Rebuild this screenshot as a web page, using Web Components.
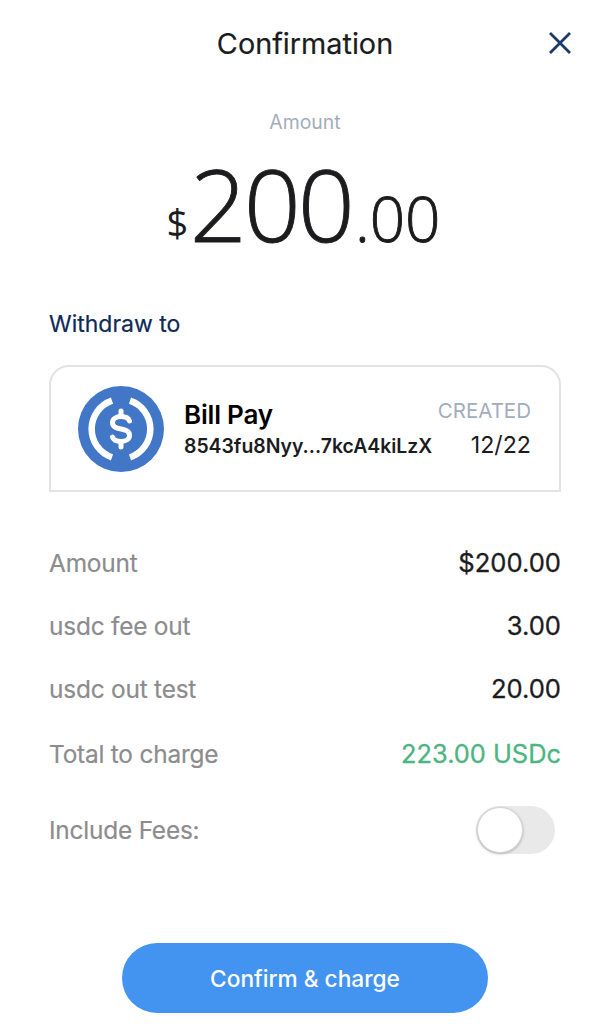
<!doctype html>
<html>
<head>
<meta charset="utf-8">
<style>
  html, body { margin: 0; background: #fff; }
  body { font-family: Inter, "Liberation Sans", sans-serif; }
</style>
</head>
<body>
<confirm-screen>
  <confirm-header title="Confirmation"></confirm-header>
  <amount-display label="Amount" whole="200" cents=".00"></amount-display>
  <withdraw-card name="Bill Pay" address="8543fu8Nyy...7kcA4kiLzX" created="12/22"></withdraw-card>
  <summary-row label="Amount" value="$200.00"></summary-row>
  <summary-row label="usdc fee out" value="3.00"></summary-row>
  <summary-row label="usdc out test" value="20.00"></summary-row>
  <summary-row label="Total to charge" value="223.00 USDc" highlight></summary-row>
  <fee-toggle label="Include Fees:"></fee-toggle>
  <confirm-button label="Confirm &amp; charge"></confirm-button>
</confirm-screen>

<script>
const confirmScreenTemplate = document.createElement("template");
confirmScreenTemplate.innerHTML = `
  <style>
    :host { display: flex; flex-direction: column; width: 610px; height: 1024px; box-sizing: border-box; padding: 0 49px; overflow: hidden; }
  </style>
  <slot></slot>
`;

class ConfirmScreen extends HTMLElement {
  connectedCallback() {
    if (!this.shadowRoot) {
      this.attachShadow({ mode: "open" });
      this.shadowRoot.appendChild(confirmScreenTemplate.content.cloneNode(true));
    }
  }
}

class ConfirmHeader extends HTMLElement {
  connectedCallback() {
    if (!this.shadowRoot) {
      this.attachShadow({ mode: "open" });
      this.shadowRoot.innerHTML = `
        <style>
          :host { display: flex; align-items: center; justify-content: center; height: 86px; position: relative; }
          h1 { margin: 0; font-size: 28.8px; font-weight: 400; color: #1c1c1e; -webkit-text-stroke: 0.2px #1c1c1e; }
          svg { position: absolute; right: -11px; top: 31px; }
        </style>
        <h1>${this.getAttribute("title")}</h1>
        <svg width="24" height="24" viewBox="0 0 24 24" fill="none" stroke="#1c3a6b" stroke-width="2.8">
          <path d="M2 2 L22 22 M22 2 L2 22"/>
        </svg>
      `;
    }
  }
}

class AmountDisplay extends HTMLElement {
  connectedCallback() {
    if (!this.shadowRoot) {
      this.attachShadow({ mode: "open" });
      this.shadowRoot.innerHTML = `
        <style>
          :host { display: flex; flex-direction: column; align-items: center; height: 224px; }
          .label { margin-top: 25px; font-size: 19.4px; line-height: 22px; color: #a3adbd; }
          .value { margin-top: 10px; padding-right: 3px; display: flex; align-items: baseline; font-family: "Open Sans", sans-serif; font-weight: 300; color: #1c1c1e; -webkit-text-stroke: 0.9px #1c1c1e; }
          .cur { font-size: 38px; margin-right: 1.5px; font-weight: 400; -webkit-text-stroke: 0; transform: translateY(-5px); }
          .whole { font-size: 100px; line-height: 120px; letter-spacing: -3px; }
          .cents { font-size: 62px; margin-left: 3px; }
        </style>
        <div class="label">${this.getAttribute("label")}</div>
        <div class="value">
          <span class="cur">$</span><span class="whole">${this.getAttribute("whole")}</span><span class="cents">${this.getAttribute("cents")}</span>
        </div>
      `;
    }
  }
}

class WithdrawCard extends HTMLElement {
  connectedCallback() {
    if (!this.shadowRoot) {
      this.attachShadow({ mode: "open" });
      this.shadowRoot.innerHTML = `
        <style>
          :host { display: block; margin-bottom: 39px; }
          h2 { margin: 0 0 27px; font-size: 23px; line-height: 28px; font-weight: 400; color: #0f2a55; -webkit-text-stroke: 0.2px #0f2a55; }
          .card { display: flex; align-items: center; height: 127px; box-sizing: border-box; padding: 0 28px 0 27px; border: 2px solid #e2e3e5; border-top-left-radius: 20px; border-top-right-radius: 20px; }
          svg { flex: none; margin-right: 20px; }
          .info { flex: 1; min-width: 0; padding-top: 5px; }
          .name { font-size: 26px; line-height: 31px; font-weight: 600; color: #000; letter-spacing: -0.2px; }
          .addr { font-size: 19.4px; line-height: 33px; font-weight: 600; color: #1c1c1e; white-space: nowrap; }
          .meta { text-align: right; padding-top: 2px; }
          .created { font-size: 20.5px; line-height: 31px; color: #a3adbd; }
          .date { font-size: 23.2px; line-height: 39px; color: #1c1c1e; }
        </style>
        <h2>Withdraw to</h2>
        <div class="card">
          <svg width="86" height="86" viewBox="0 0 86 86">
            <circle cx="43" cy="43" r="43" fill="#4277c8"/>
            <g fill="none" stroke="#fff" stroke-width="6.5">
              <path d="M34 14.6 A30 30 0 0 0 34 71.4"/>
              <path d="M52 14.6 A30 30 0 0 1 52 71.4"/>
            </g>
            <g fill="none" stroke="#fff" stroke-width="5" stroke-linecap="round">
              <path d="M51.5 35 C50.5 32 47.5 30.5 43 30.5 C38 30.5 34.5 33 34.5 36.5 C34.5 41 38.5 42 43 43 C47.5 44 51.5 45 51.5 49.5 C51.5 53 48 55.5 43 55.5 C38.5 55.5 35.5 54 34.5 51"/>
              <path d="M43 25 V30 M43 56 V61"/>
            </g>
          </svg>
          <div class="info">
            <div class="name">${this.getAttribute("name")}</div>
            <div class="addr">${this.getAttribute("address")}</div>
          </div>
          <div class="meta">
            <div class="created">CREATED</div>
            <div class="date">${this.getAttribute("created")}</div>
          </div>
        </div>
      `;
    }
  }
}

class SummaryRow extends HTMLElement {
  connectedCallback() {
    if (!this.shadowRoot) {
      this.attachShadow({ mode: "open" });
      this.shadowRoot.innerHTML = `
        <style>
          :host { display: flex; justify-content: space-between; align-items: center; height: 63px; font-size: 25.6px; color: #1c1c1e; }
          :host([highlight]) { margin-top: 2px; }
          .label { color: #8c8c8e; font-size: 24.4px; letter-spacing: -0.2px; -webkit-text-stroke: 0.2px #8c8c8e; }
          .value { -webkit-text-stroke: 0.3px currentColor; }
          :host([highlight]) .value { color: #4db57f; font-size: 25.4px; }
        </style>
        <span class="label">${this.getAttribute("label")}</span>
        <span class="value">${this.getAttribute("value")}</span>
      `;
    }
  }
}

class FeeToggle extends HTMLElement {
  connectedCallback() {
    if (!this.shadowRoot) {
      this.attachShadow({ mode: "open" });
      this.shadowRoot.innerHTML = `
        <style>
          :host { display: flex; justify-content: space-between; align-items: center; height: 48px; margin-top: 21px; padding-right: 6px; font-size: 24.4px; letter-spacing: -0.2px; color: #8c8c8e; }
          span { -webkit-text-stroke: 0.2px #8c8c8e; }
          .track { display: flex; align-items: center; width: 79px; height: 48px; border-radius: 24px; background: #e9e9ea; }
          .thumb { width: 44px; height: 44px; margin-left: 1px; border-radius: 50%; background: #fff; border: 1px solid #d5d5d5; box-shadow: 0 1px 3px rgba(0,0,0,.25); }
        </style>
        <span>${this.getAttribute("label")}</span>
        <div class="track"><div class="thumb"></div></div>
      `;
    }
  }
}

class ConfirmButton extends HTMLElement {
  connectedCallback() {
    if (!this.shadowRoot) {
      this.attachShadow({ mode: "open" });
      this.shadowRoot.innerHTML = `
        <style>
          :host { display: flex; justify-content: center; margin-top: 89px; }
          button { width: 366px; height: 70px; border: 0; border-radius: 35px; background: #4394f0; color: #fff; font: 500 22.7px Inter, sans-serif; }
        </style>
        <button>${this.getAttribute("label")}</button>
      `;
    }
  }
}

customElements.define("confirm-screen", ConfirmScreen);
customElements.define("confirm-header", ConfirmHeader);
customElements.define("amount-display", AmountDisplay);
customElements.define("withdraw-card", WithdrawCard);
customElements.define("summary-row", SummaryRow);
customElements.define("fee-toggle", FeeToggle);
customElements.define("confirm-button", ConfirmButton);
</script>
</body>
</html>
